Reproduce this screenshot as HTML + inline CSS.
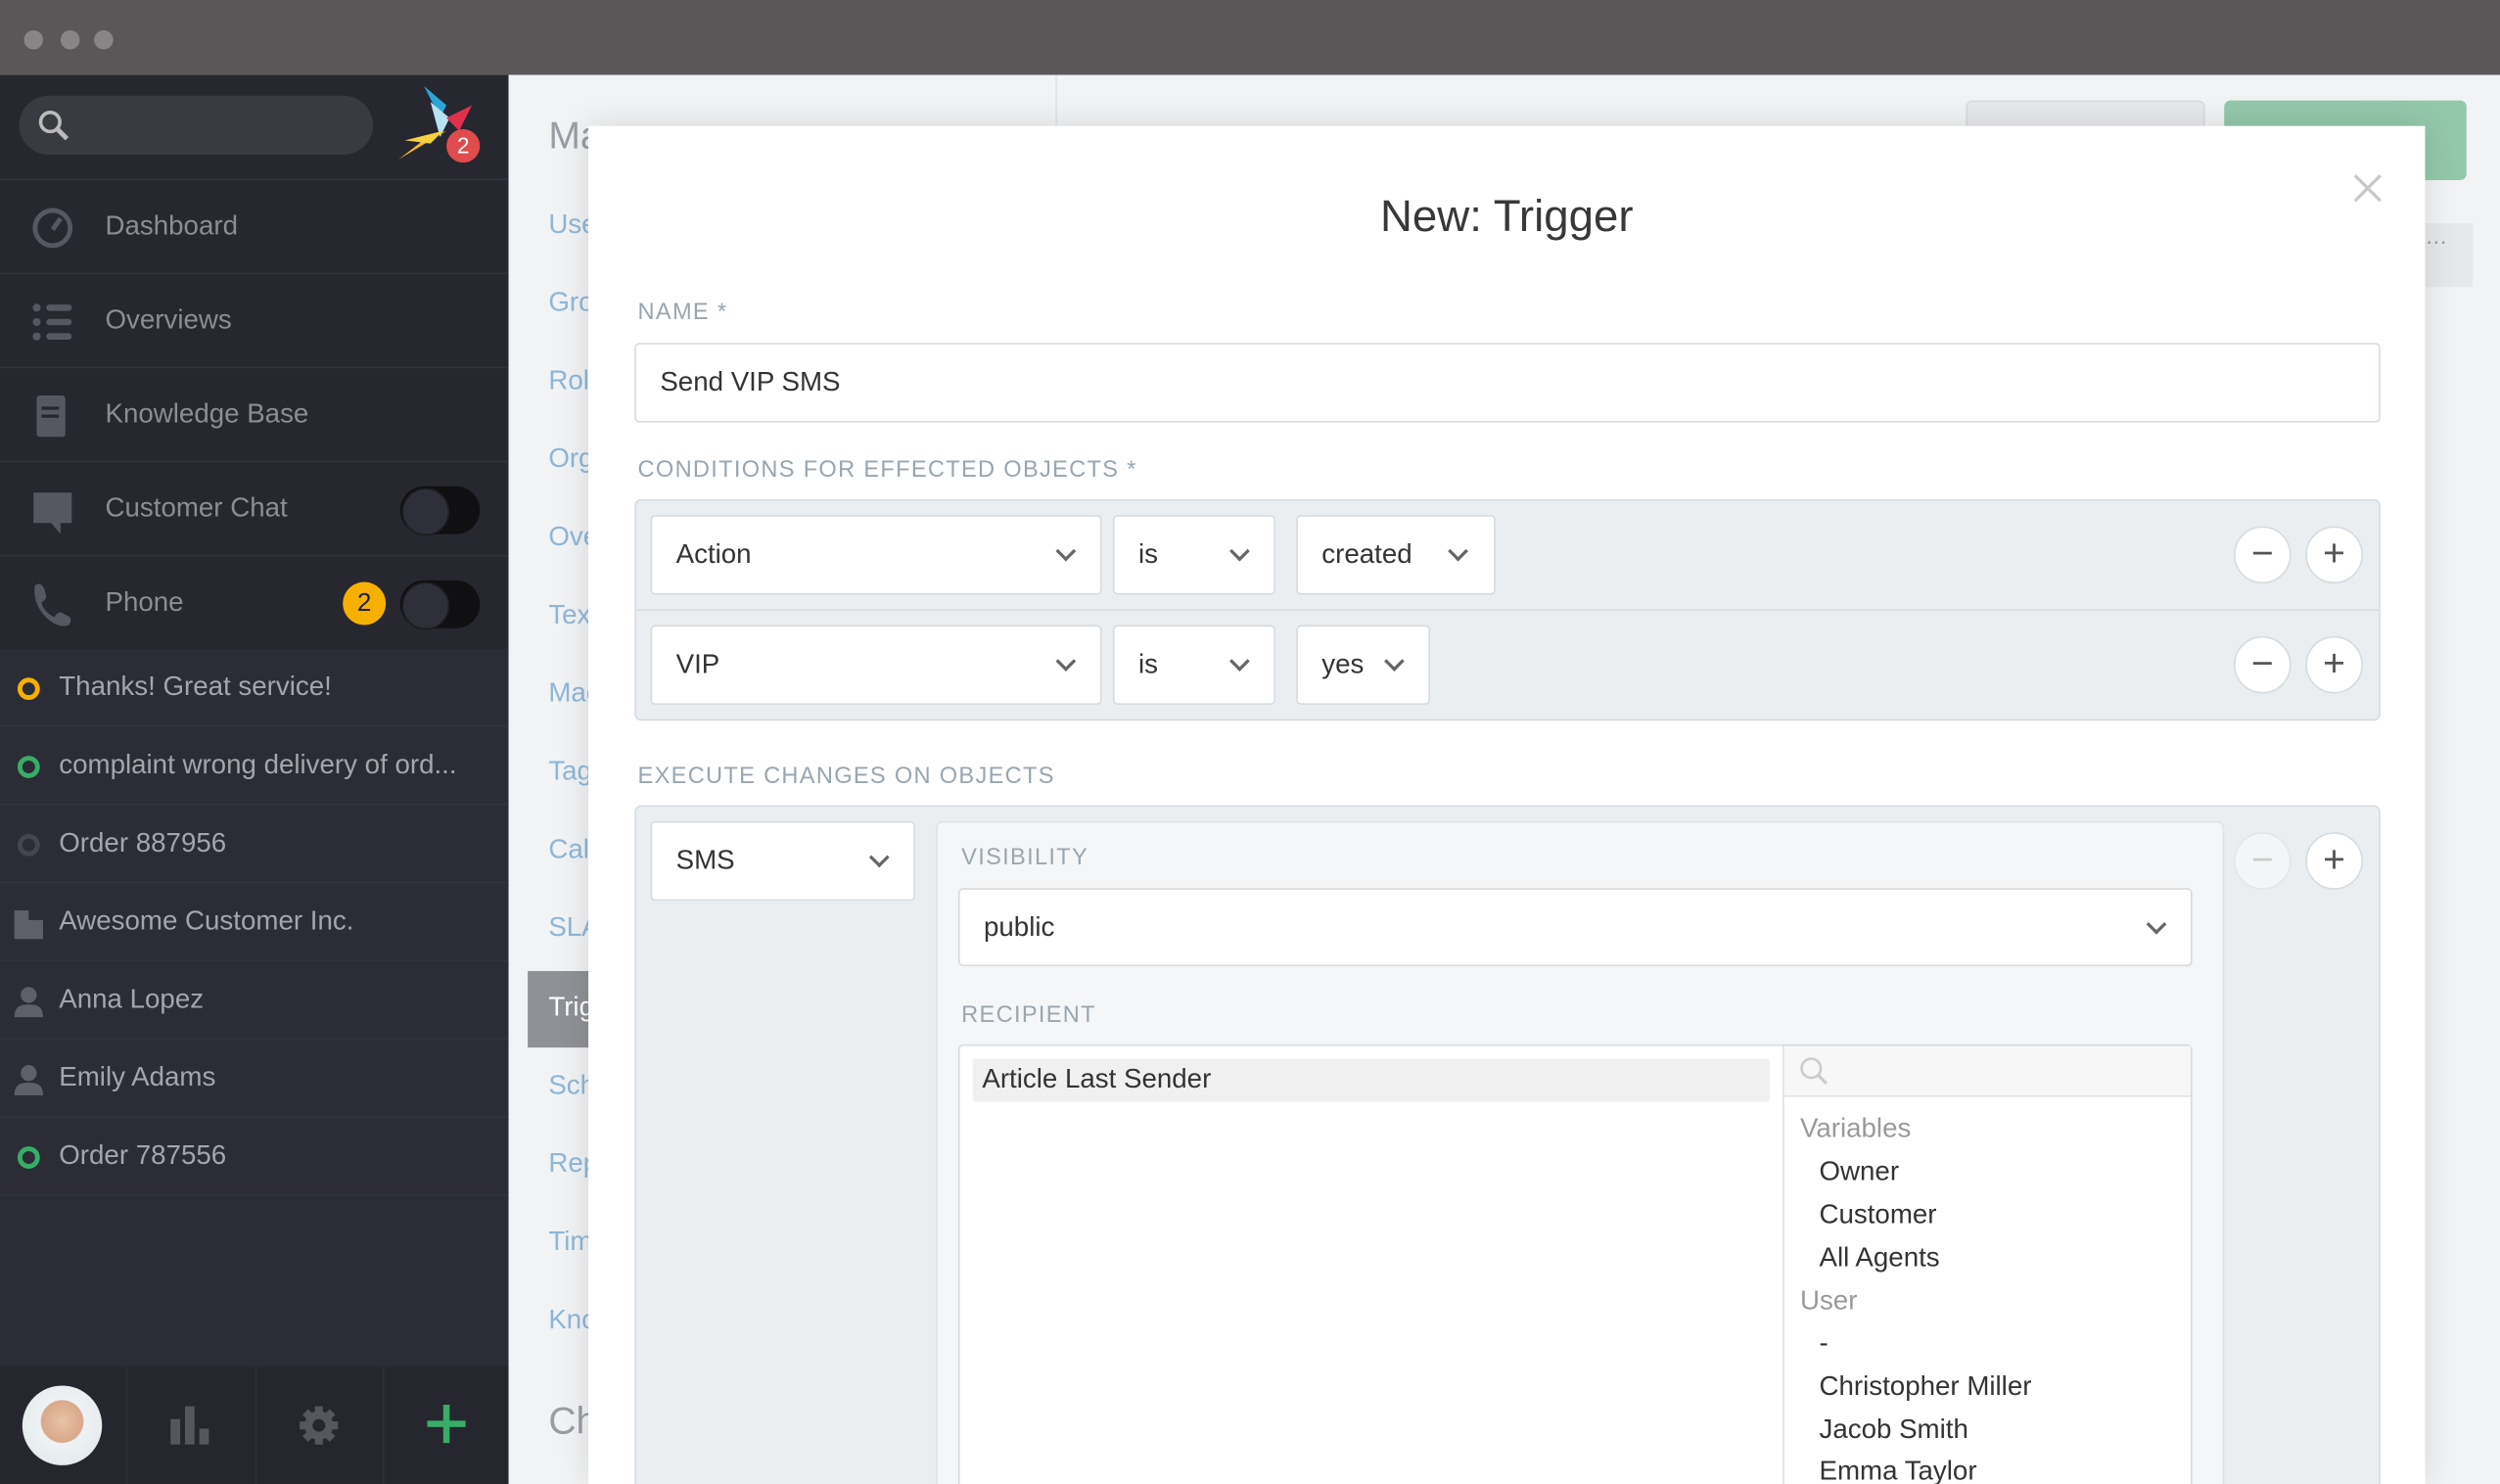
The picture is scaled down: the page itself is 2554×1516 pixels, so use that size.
<!DOCTYPE html>
<html><head><meta charset="utf-8"><style>
*{box-sizing:border-box;margin:0;padding:0}
html,body{width:2554px;height:1516px;overflow:hidden;background:#fff}
#w{position:absolute;left:0;top:0;width:1568px;height:931px;transform:scale(1.62883);transform-origin:0 0;font-family:"Liberation Sans",sans-serif;overflow:hidden}
.a{position:absolute}
.nav{position:absolute;left:0;width:319px;height:59px;border-top:1px solid #31323b;color:#8b8e94;font-size:17px}
.nav span{position:absolute;left:66px;top:50%;transform:translateY(-50%)}
.li{position:absolute;left:0;width:319px;height:49px;border-bottom:1px solid #33343c;color:#a3a6ab;font-size:17px;background:#2b2c35}
.li span{position:absolute;left:37px;top:50%;transform:translateY(-50%)}
.ring{position:absolute;left:11px;top:18px;width:14px;height:14px;border-radius:50%;border:3px solid}
.mid{position:absolute;left:344px;color:#8fb6d6;font-size:17px}
.lbl{position:absolute;left:400px;font-size:14.5px;letter-spacing:0.8px;color:#98a6af}
.in{position:absolute;background:#fff;border:1px solid #d6dbdf;border-radius:3px;font-size:17px;color:#333;}
.in span{position:absolute;left:15px;top:50%;transform:translateY(-50%)}
.chev{position:absolute;top:50%;width:9px;height:9px;border-right:2px solid #666;border-bottom:2px solid #666;transform:translateY(-75%) rotate(45deg)}
.cb{position:absolute;width:36px;height:36px;border-radius:50%;background:#fff;border:1px solid #d6dbdf;color:#555;font-size:24px;line-height:33px;text-align:center}
.tg{position:absolute;width:50px;height:30px;border-radius:15px;background:#101013;left:251px}
.tg:before{content:"";position:absolute;left:1px;top:1px;width:28px;height:28px;border-radius:50%;background:#2e2f38;border:1px solid #1c1c20}
.v{position:absolute;left:1141px;font-size:17px;color:#333}
</style></head><body><div id="w">
<div class="a" style="left:0;top:0;width:1568px;height:47px;background:#5b5758"></div>
<div class="a" style="left:15px;top:19px;width:12px;height:12px;border-radius:50%;background:#898586"></div>
<div class="a" style="left:38px;top:19px;width:12px;height:12px;border-radius:50%;background:#898586"></div>
<div class="a" style="left:59px;top:19px;width:12px;height:12px;border-radius:50%;background:#898586"></div>

<div class="a" style="left:0;top:47px;width:319px;height:884px;background:#26272f"></div>
<div class="a" style="left:12px;top:60px;width:222px;height:37px;border-radius:19px;background:#383b3f"></div>
<svg class="a" style="left:23px;top:68px" width="22" height="22" viewBox="0 0 22 22"><circle cx="8.5" cy="8.5" r="6" fill="none" stroke="#bbb" stroke-width="2.2"/><path d="M13 13l6 6" stroke="#bbb" stroke-width="3"/></svg>
<svg class="a" style="left:248px;top:54px" width="56" height="50" viewBox="0 0 56 50"><path d="M18 0l10 20 4-8z" fill="#2aa5d8"/><path d="M22 10l6 22 6-12z" fill="#b7e2f2"/><path d="M32 20l16-8-8 16z" fill="#e0314b"/><path d="M2 46l30-18-12 4z" fill="#f2b72d"/><path d="M6 34l24-6-8 8z" fill="#f6d240"/></svg>
<div class="a" style="left:280px;top:81px;width:21px;height:21px;border-radius:50%;background:#e04b4b;color:#fff;font-size:14px;text-align:center;line-height:21px">2</div>

<div class="nav" style="top:112px"><svg class="a" style="left:20px;top:17px" width="26" height="26" viewBox="0 0 26 26"><circle cx="13" cy="13" r="11" fill="none" stroke="#555860" stroke-width="3"/><path d="M13 14l5-7" stroke="#555860" stroke-width="3"/></svg><span>Dashboard</span></div>
<div class="nav" style="top:171px"><svg class="a" style="left:20px;top:18px" width="26" height="24" viewBox="0 0 26 24"><g fill="#555860"><circle cx="3" cy="3" r="2.5"/><circle cx="3" cy="12" r="2.5"/><circle cx="3" cy="21" r="2.5"/><rect x="9" y="1" width="16" height="4" rx="2"/><rect x="9" y="10" width="16" height="4" rx="2"/><rect x="9" y="19" width="16" height="4" rx="2"/></g></svg><span>Overviews</span></div>
<div class="nav" style="top:230px"><svg class="a" style="left:22px;top:16px" width="22" height="28" viewBox="0 0 22 28"><rect x="1" y="1" width="18" height="26" rx="2" fill="#555860"/><rect x="4" y="8" width="11" height="2" fill="#26272f"/><rect x="4" y="13" width="11" height="2" fill="#26272f"/></svg><span>Knowledge Base</span></div>
<div class="nav" style="top:289px"><svg class="a" style="left:20px;top:18px" width="26" height="28" viewBox="0 0 26 28"><path d="M1 1h24v19H18l0 7-6-7H1z" fill="#555860"/></svg><span>Customer Chat</span><div class="tg" style="top:15px"></div></div>
<div class="nav" style="top:348px"><svg class="a" style="left:18px;top:16px" width="30" height="30" viewBox="0 0 30 30"><path d="M4 2c3-2 5 0 6 3l1 4c0 2-2 3-3 4 1 4 4 7 8 9 1-1 2-3 4-3l4 2c3 1 3 4 1 6-8 4-24-10-21-25z" fill="#555860"/></svg><span>Phone</span>
<div class="a" style="left:215px;top:16px;width:27px;height:27px;border-radius:50%;background:#f6b100;color:#222;font-size:16px;text-align:center;line-height:27px">2</div><div class="tg" style="top:15px"></div></div>

<div class="li" style="top:407px"><div class="ring" style="border-color:#f6b100"></div><span>Thanks! Great service!</span></div>
<div class="li" style="top:456px"><div class="ring" style="border-color:#38ad69"></div><span>complaint wrong delivery of ord...</span></div>
<div class="li" style="top:505px"><div class="ring" style="border-color:#44464e"></div><span>Order 887956</span></div>
<div class="li" style="top:554px"><svg class="a" style="left:8px;top:15px" width="20" height="20" viewBox="0 0 20 20"><path d="M1 20V2h9v6h9v12z" fill="#5d6068"/></svg><span>Awesome Customer Inc.</span></div>
<div class="li" style="top:603px"><svg class="a" style="left:8px;top:15px" width="20" height="20" viewBox="0 0 20 20"><circle cx="10" cy="6" r="5" fill="#5d6068"/><path d="M1 20c0-7 4-8 9-8s9 1 9 8z" fill="#5d6068"/></svg><span>Anna Lopez</span></div>
<div class="li" style="top:652px"><svg class="a" style="left:8px;top:15px" width="20" height="20" viewBox="0 0 20 20"><circle cx="10" cy="6" r="5" fill="#5d6068"/><path d="M1 20c0-7 4-8 9-8s9 1 9 8z" fill="#5d6068"/></svg><span>Emily Adams</span></div>
<div class="li" style="top:701px"><div class="ring" style="border-color:#38ad69"></div><span>Order 787556</span></div>
<div class="a" style="left:0;top:750px;width:319px;height:107px;background:#2b2c35"></div>

<div class="a" style="left:0;top:857px;width:319px;height:74px;background:#25262e"></div>
<div class="a" style="left:79px;top:857px;width:1px;height:74px;background:#2f3038"></div>
<div class="a" style="left:160px;top:857px;width:1px;height:74px;background:#2f3038"></div>
<div class="a" style="left:240px;top:857px;width:1px;height:74px;background:#2f3038"></div>
<div class="a" style="left:14px;top:869px;width:50px;height:50px;border-radius:50%;background:radial-gradient(circle at 50% 45%,#e9c3a6 0,#d9a88a 35%,#eef2f4 37%,#dfe6ea 100%)"></div>
<svg class="a" style="left:106px;top:880px" width="26" height="26" viewBox="0 0 26 26"><g fill="#55575e"><rect x="1" y="10" width="6" height="16"/><rect x="10" y="2" width="6" height="24"/><rect x="19" y="16" width="6" height="10"/></g></svg>
<svg class="a" style="left:187px;top:881px" width="26" height="26" viewBox="0 0 26 26"><circle cx="13" cy="13" r="9" fill="#55575e"/><g stroke="#55575e" stroke-width="5"><path d="M13 1v24M1 13h24M4.5 4.5l17 17M21.5 4.5l-17 17"/></g><circle cx="13" cy="13" r="4" fill="#25262e"/></svg>
<div class="a" style="left:268px;top:891px;width:24px;height:4px;background:#38ad69"></div>
<div class="a" style="left:278px;top:881px;width:4px;height:24px;background:#38ad69"></div>

<div class="a" style="left:319px;top:47px;width:1249px;height:884px;background:#f1f3f5"></div>
<div class="a" style="left:662px;top:47px;width:1px;height:884px;background:#e2e5e8"></div>
<div class="a" style="left:344px;top:72px;font-size:24px;color:#9a9da3">Ma</div>
<div class="mid" style="top:131px">Use</div><div class="mid" style="top:180px">Gro</div><div class="mid" style="top:229px">Rol</div><div class="mid" style="top:278px">Org</div><div class="mid" style="top:327px">Ove</div><div class="mid" style="top:376px">Tex</div><div class="mid" style="top:425px">Mac</div><div class="mid" style="top:474px">Tag</div><div class="mid" style="top:523px">Cal</div><div class="mid" style="top:572px">SLA</div>
<div class="a" style="left:331px;top:609px;width:40px;height:48px;background:#8f9196"></div><div class="mid" style="top:622px;color:#fff">Trig</div>
<div class="mid" style="top:671px">Sch</div><div class="mid" style="top:720px">Rep</div><div class="mid" style="top:769px">Tim</div><div class="mid" style="top:818px">Knc</div>
<div class="a" style="left:344px;top:878px;font-size:24px;color:#9a9da3">Ch</div>
<div class="a" style="left:1233px;top:63px;width:150px;height:50px;border:1px solid #d9dcdf;border-radius:4px;background:#e6e8eb"></div>
<div class="a" style="left:1395px;top:63px;width:152px;height:50px;border-radius:4px;background:#94c8ab"></div>
<div class="a" style="left:1521px;top:140px;width:30px;height:40px;background:#e6e8eb;color:#999;font-size:14px">…</div>

<div class="a" style="left:369px;top:79px;width:1152px;height:852px;background:#fff;box-shadow:0 0 20px rgba(0,0,0,.12)"></div>
<div class="a" style="left:369px;top:120px;width:1152px;text-align:center;font-size:28px;color:#38383a">New: Trigger</div>
<svg class="a" style="left:1475px;top:108px" width="20" height="20" viewBox="0 0 20 20"><path d="M2 2l16 16M18 2L2 18" stroke="#c8c8c8" stroke-width="2"/></svg>

<div class="lbl" style="top:188px">NAME *</div>
<div class="in" style="left:398px;top:215px;width:1095px;height:50px"><span>Send VIP SMS</span></div>
<div class="lbl" style="top:287px">CONDITIONS FOR EFFECTED OBJECTS *</div>
<div class="a" style="left:398px;top:313px;width:1095px;height:139px;background:#eaeef1;border:1px solid #d6dde2;border-radius:4px"></div>
<div class="a" style="left:399px;top:382px;width:1093px;height:1px;background:#d6dde2"></div>
<div class="in" style="left:408px;top:323px;width:283px;height:50px"><span>Action</span><i class="chev" style="left:255px"></i></div>
<div class="in" style="left:698px;top:323px;width:102px;height:50px"><span>is</span><i class="chev" style="left:74px"></i></div>
<div class="in" style="left:813px;top:323px;width:125px;height:50px"><span>created</span><i class="chev" style="left:96px"></i></div>
<div class="in" style="left:408px;top:392px;width:283px;height:50px"><span>VIP</span><i class="chev" style="left:255px"></i></div>
<div class="in" style="left:698px;top:392px;width:102px;height:50px"><span>is</span><i class="chev" style="left:74px"></i></div>
<div class="in" style="left:813px;top:392px;width:84px;height:50px"><span>yes</span><i class="chev" style="left:56px"></i></div>
<div class="cb" style="left:1401px;top:330px">−</div><div class="cb" style="left:1446px;top:330px">+</div>
<div class="cb" style="left:1401px;top:399px">−</div><div class="cb" style="left:1446px;top:399px">+</div>

<div class="lbl" style="top:479px">EXECUTE CHANGES ON OBJECTS</div>
<div class="a" style="left:398px;top:505px;width:1095px;height:440px;background:#eaeef1;border:1px solid #d6dde2;border-radius:4px"></div>
<div class="in" style="left:408px;top:515px;width:166px;height:50px"><span>SMS</span><i class="chev" style="left:138px"></i></div>
<div class="a" style="left:587px;top:515px;width:808px;height:430px;background:#f5f6f7;border:1px solid #dde2e5;border-radius:4px"></div>
<div class="cb" style="left:1401px;top:522px;color:#ccc;border-color:#e3e6e8;background:#f3f5f6">−</div><div class="cb" style="left:1446px;top:522px">+</div>
<div class="lbl" style="left:603px;top:530px">VISIBILITY</div>
<div class="in" style="left:601px;top:557px;width:774px;height:49px"><span>public</span><i class="chev" style="left:746px"></i></div>
<div class="lbl" style="left:603px;top:629px">RECIPIENT</div>
<div class="a" style="left:601px;top:655px;width:774px;height:290px;background:#fff;border:1px solid #d6dbdf;border-radius:3px"></div>
<div class="a" style="left:1118px;top:656px;width:1px;height:280px;background:#dde0e3"></div>
<div class="a" style="left:1119px;top:656px;width:255px;height:32px;background:#f7f7f7;border-bottom:1px solid #e2e4e6"></div>
<svg class="a" style="left:1128px;top:662px" width="20" height="20" viewBox="0 0 20 20"><circle cx="8" cy="8" r="6" fill="none" stroke="#ccc" stroke-width="1.6"/><path d="M12.5 12.5l5 5" stroke="#ccc" stroke-width="2"/></svg>
<div class="a" style="left:610px;top:664px;width:500px;height:27px;background:#f0f0f0;border-radius:2px;font-size:17px;color:#333;padding:3px 6px">Article Last Sender</div>
<div class="a" style="left:1129px;top:698px;font-size:17px;color:#9a9a9a">Variables</div>
<div class="v" style="top:725px">Owner</div><div class="v" style="top:752px">Customer</div><div class="v" style="top:779px">All Agents</div>
<div class="a" style="left:1129px;top:806px;font-size:17px;color:#9a9a9a">User</div>
<div class="v" style="top:833px">-</div><div class="v" style="top:860px">Christopher Miller</div><div class="v" style="top:887px">Jacob Smith</div><div class="v" style="top:913px">Emma Taylor</div>
</div></body></html>
